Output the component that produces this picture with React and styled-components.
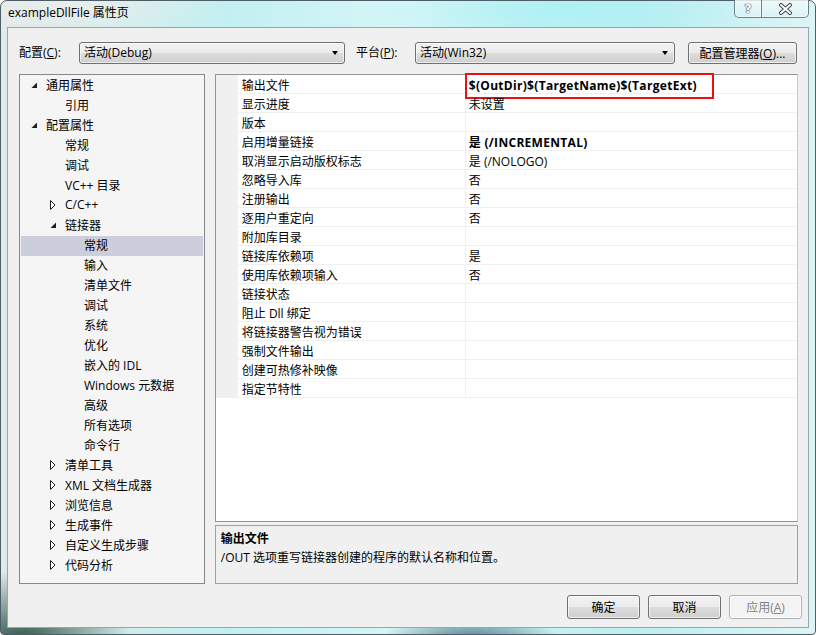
import React from "react"
import styled, { createGlobalStyle } from "styled-components"

const GlobalStyle = createGlobalStyle`
  html, body {
    margin: 0;
    padding: 0;
  }
  body {
    width: 816px;
    height: 635px;
    overflow: hidden;
    font-family: "Open Sans", "Noto Sans CJK SC", sans-serif;
    font-size: 12px;
    color: #000;
  }
`

const treeItems = [
    { level: 0, arrow: "open", text: "通用属性" },
    { level: 1, text: "引用" },
    { level: 0, arrow: "open", text: "配置属性" },
    { level: 1, text: "常规" },
    { level: 1, text: "调试" },
    { level: 1, text: "VC++ 目录" },
    { level: 1, arrow: "closed", text: "C/C++" },
    { level: 1, arrow: "open", text: "链接器" },
    { level: 2, text: "常规", selected: true },
    { level: 2, text: "输入" },
    { level: 2, text: "清单文件" },
    { level: 2, text: "调试" },
    { level: 2, text: "系统" },
    { level: 2, text: "优化" },
    { level: 2, text: "嵌入的 IDL" },
    { level: 2, text: "Windows 元数据" },
    { level: 2, text: "高级" },
    { level: 2, text: "所有选项" },
    { level: 2, text: "命令行" },
    { level: 1, arrow: "closed", text: "清单工具" },
    { level: 1, arrow: "closed", text: "XML 文档生成器" },
    { level: 1, arrow: "closed", text: "浏览信息" },
    { level: 1, arrow: "closed", text: "生成事件" },
    { level: 1, arrow: "closed", text: "自定义生成步骤" },
    { level: 1, arrow: "closed", text: "代码分析" },
]

const properties = [
    { name: "输出文件", value: "$(OutDir)$(TargetName)$(TargetExt)", bold: true, marked: true },
    { name: "显示进度", value: "未设置" },
    { name: "版本", value: "" },
    { name: "启用增量链接", value: "是 (/INCREMENTAL)", bold: true },
    { name: "取消显示启动版权标志", value: "是 (/NOLOGO)" },
    { name: "忽略导入库", value: "否" },
    { name: "注册输出", value: "否" },
    { name: "逐用户重定向", value: "否" },
    { name: "附加库目录", value: "" },
    { name: "链接库依赖项", value: "是" },
    { name: "使用库依赖项输入", value: "否" },
    { name: "链接状态", value: "" },
    { name: "阻止 Dll 绑定", value: "" },
    { name: "将链接器警告视为错误", value: "" },
    { name: "强制文件输出", value: "" },
    { name: "创建可热修补映像", value: "" },
    { name: "指定节特性", value: "" },
]

const Window = styled.div`
    box-sizing: border-box;
    width: 816px;
    height: 635px;
    padding: 0 6px 6px 6px;
    border: 1px solid #4d5f66;
    border-radius: 7px 7px 4px 4px;
    display: flex;
    flex-direction: column;
    background:
        radial-gradient(ellipse 110px 70px at 20px 640px, rgba(36, 78, 62, 0.95), transparent),
        radial-gradient(ellipse 90px 30px at 470px 640px, rgba(40, 90, 110, 0.8), transparent),
        radial-gradient(ellipse 160px 40px at 60px 0px, rgba(235, 238, 236, 0.95), transparent),
        radial-gradient(ellipse 200px 40px at 560px 10px, rgba(170, 240, 245, 0.9), transparent),
        linear-gradient(90deg, #e2e9e8 0%, #c2f0f2 28%, #d9f6f7 52%, #bdeef1 78%, #dcf5f6 100%);
`

const TitleBar = styled.div`
    height: 26px;
    display: flex;
    align-items: flex-start;
`

const Title = styled.div`
    line-height: 23px;
    padding-left: 1px;
    font-size: 12px;
    color: #000;
`

const CaptionButtons = styled.div`
    margin-left: auto;
    margin-top: -1px;
    display: flex;
`

const CaptionButton = styled.div`
    box-sizing: border-box;
    width: ${p => p.$width}px;
    height: 18px;
    border: 1px solid rgba(70, 90, 105, 0.75);
    border-top: none;
    border-left-width: ${p => (p.$first ? 1 : 0)}px;
    border-radius: ${p => (p.$first ? "0 0 0 5px" : "0 0 5px 0")};
    background: linear-gradient(rgba(255, 255, 255, 0.6), rgba(225, 240, 244, 0.45));
    box-shadow: inset 0 0 0 1px rgba(255, 255, 255, 0.5);
    display: flex;
    align-items: center;
    justify-content: center;
    font: bold 13px "DejaVu Sans", sans-serif;
    color: #fff;
    text-shadow: 0 0 1px #3c4a55, 0 0 1px #3c4a55, 0 0 1px #3c4a55;
`

const Client = styled.div`
    flex: 1;
    border: 1px solid #9aa6ad;
    background: #f0f0f0;
    display: flex;
    flex-direction: column;
    padding: 14px 0 0 11px;
`

const TopBar = styled.div`
    display: flex;
    align-items: center;
    height: 22px;
    padding-right: 11px;
`

const FieldLabel = styled.label`
    width: ${p => p.$width}px;
    margin-left: ${p => p.$gap || 0}px;
    line-height: 22px;
    white-space: nowrap;
`

const Key = styled.span`
    text-decoration: underline;
    text-underline-offset: 1px;
`

const Combo = styled.div`
    box-sizing: border-box;
    width: ${p => p.$width}px;
    height: 22px;
    border: 1px solid #707070;
    border-radius: 3px;
    background: linear-gradient(#f2f2f2 0%, #ebebeb 50%, #dddddd 50%, #cfcfcf 100%);
    box-shadow: inset 0 0 0 1px rgba(255, 255, 255, 0.6);
    display: flex;
    align-items: center;
    padding: 0 6px 0 4px;
    line-height: 20px;
`

const ComboText = styled.span`
    flex: 1;
`

const DropArrow = styled.span`
    width: 0;
    height: 0;
    border-left: 3.5px solid transparent;
    border-right: 3.5px solid transparent;
    border-top: 4px solid #000;
`

const Button = styled.button`
    box-sizing: border-box;
    width: ${p => p.$width || 73}px;
    height: ${p => p.$height || 24}px;
    margin-left: ${p => p.$gap || 0}px;
    padding: 0;
    border: 1px solid ${p => (p.disabled ? "#adb2b5" : "#707070")};
    border-radius: 3px;
    background: ${p =>
        p.disabled
            ? "#f4f4f4"
            : "linear-gradient(#f2f2f2 0%, #ebebeb 50%, #dddddd 50%, #cfcfcf 100%)"};
    box-shadow: inset 0 0 0 1px rgba(255, 255, 255, 0.65);
    font-family: "Open Sans", "Noto Sans CJK SC", sans-serif;
    font-size: 12px;
    color: ${p => (p.disabled ? "#838383" : "#000")};
`

const Main = styled.div`
    display: flex;
    margin-top: 10px;
    height: 510px;
    padding-right: 10px;
`

const Tree = styled.div`
    box-sizing: border-box;
    width: 186px;
    border: 1px solid #828790;
    background: #f5f5f5;
    padding: 1px;
`

const TreeRow = styled.div`
    box-sizing: border-box;
    height: 20px;
    display: flex;
    align-items: center;
    position: relative;
    padding-left: ${p => 25 + p.$level * 19}px;
    padding-bottom: 3px;
    background: ${p => (p.$selected ? "#cccedb" : "transparent")};
    white-space: nowrap;
`

const ArrowSlot = styled.span`
    position: absolute;
    left: ${p => 10 + p.$level * 19}px;
    top: 4px;
    width: 9px;
    height: 10px;
    display: flex;
    align-items: center;
`

const RightColumn = styled.div`
    width: 584px;
    margin-left: 10px;
    display: flex;
    flex-direction: column;
`

const Grid = styled.div`
    box-sizing: border-box;
    height: 448px;
    border: 1px solid #939393;
    border-right-color: #c8c8c8;
    background: #fff;
`

const PropRow = styled.div`
    display: grid;
    grid-template-columns: 22px 228px 1fr;
    grid-template-rows: 19px;
    height: 19px;
`

const Gutter = styled.div`
    background: #f0f0f0;
`

const Cell = styled.div`
    box-sizing: border-box;
    height: 19px;
    border-bottom: 1px solid #f0f0f0;
    padding-top: 4px;
    line-height: 14px;
    white-space: nowrap;
`

const NameCell = styled(Cell)`
    border-right: 1px solid #f0f0f0;
    padding-left: 4px;
`

const ValueCell = styled(Cell)`
    position: relative;
    padding-left: 3px;
    font-weight: ${p => (p.$bold ? 700 : 400)};
    letter-spacing: ${p => (p.$bold ? "0.3px" : "0")};
`

const Marker = styled.div`
    position: absolute;
    left: -1px;
    top: -2px;
    width: 249px;
    height: 26px;
    box-sizing: border-box;
    border: 2px solid #e81010;
`

const Description = styled.div`
    box-sizing: border-box;
    height: 59px;
    margin-top: 3px;
    border: 1px solid #a0a0a0;
    background: #f0f0f0;
    padding: 3px 5px;
    line-height: 19px;
`

const DescTitle = styled.div`
    font-weight: 700;
`

const Footer = styled.div`
    display: flex;
    justify-content: flex-end;
    margin-top: 11px;
    padding-right: 6px;
`

const TreeArrow = ({ kind }) =>
    kind === "open" ? (
        <svg width="7" height="7" viewBox="0 0 7 7">
            <polygon points="6,0.5 6,6 0.5,6" fill="#1e1e1e" />
        </svg>
    ) : (
        <svg width="6" height="10" viewBox="0 0 6 10">
            <polygon points="0.5,0.5 5,5 0.5,9.5" fill="#fff" stroke="#1e1e1e" strokeWidth="1" />
        </svg>
    )

const CloseGlyph = () => (
    <svg width="17" height="12" viewBox="0 0 17 12">
        <path d="M4 2 L13 10 M13 2 L4 10" stroke="#3c4a55" strokeWidth="4" strokeLinecap="round" />
        <path d="M4 2 L13 10 M13 2 L4 10" stroke="#fff" strokeWidth="2" strokeLinecap="round" />
    </svg>
)

export default function App() {
    return (
        <>
            <GlobalStyle />
            <Window>
                <TitleBar>
                    <Title>exampleDllFile 属性页</Title>
                    <CaptionButtons>
                        <CaptionButton $width={28} $first>?</CaptionButton>
                        <CaptionButton $width={47}>
                            <CloseGlyph />
                        </CaptionButton>
                    </CaptionButtons>
                </TitleBar>
                <Client>
                    <TopBar>
                        <FieldLabel $width={60}>
                            配置(<Key>C</Key>):
                        </FieldLabel>
                        <Combo $width={266}>
                            <ComboText>活动(Debug)</ComboText>
                            <DropArrow />
                        </Combo>
                        <FieldLabel $width={59} $gap={11}>
                            平台(<Key>P</Key>):
                        </FieldLabel>
                        <Combo $width={260}>
                            <ComboText>活动(Win32)</ComboText>
                            <DropArrow />
                        </Combo>
                        <Button $width={109} $height={22} $gap={13}>
                            配置管理器(<Key>O</Key>)...
                        </Button>
                    </TopBar>
                    <Main>
                        <Tree>
                            {treeItems.map((item, i) => (
                                <TreeRow key={i} $level={item.level} $selected={item.selected}>
                                    {item.arrow && (
                                        <ArrowSlot $level={item.level}>
                                            <TreeArrow kind={item.arrow} />
                                        </ArrowSlot>
                                    )}
                                    {item.text}
                                </TreeRow>
                            ))}
                        </Tree>
                        <RightColumn>
                            <Grid>
                                {properties.map(p => (
                                    <PropRow key={p.name}>
                                        <Gutter />
                                        <NameCell>{p.name}</NameCell>
                                        <ValueCell $bold={p.bold}>
                                            {p.value}
                                            {p.marked && <Marker />}
                                        </ValueCell>
                                    </PropRow>
                                ))}
                            </Grid>
                            <Description>
                                <DescTitle>输出文件</DescTitle>
                                <div>/OUT 选项重写链接器创建的程序的默认名称和位置。</div>
                            </Description>
                        </RightColumn>
                    </Main>
                    <Footer>
                        <Button>确定</Button>
                        <Button $gap={8}>取消</Button>
                        <Button $gap={8} disabled>
                            应用(<Key>A</Key>)
                        </Button>
                    </Footer>
                </Client>
            </Window>
        </>
    )
}
